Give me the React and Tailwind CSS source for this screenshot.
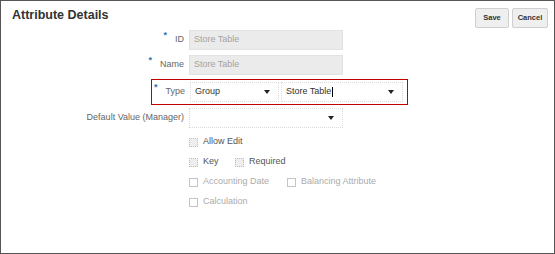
import React from "react";

const FONT = { fontFamily: '"Liberation Sans", Arial, sans-serif' };

function Star() {
  return <span className="text-[9px] font-bold leading-none text-[#2f74c0] self-start mt-[1px] mr-[8px]">*</span>;
}

function Caret() {
  return (
    <svg width="6" height="4" viewBox="0 0 6 4" className="shrink-0">
      <polygon points="0,0 6,0 3,4" fill="#222" />
    </svg>
  );
}

function ReadOnlyInput({ value }) {
  return (
    <div className="w-[154px] h-[20px] bg-[#ebebeb] border border-[#e2e2e2] flex items-center pl-[4px] text-[9px] text-[#a3a3a3]">
      {value}
    </div>
  );
}

function Select({ width, children }) {
  return (
    <div
      className="h-[20px] bg-white border border-dotted border-[#dcd8dc] flex items-center justify-between pl-[4px] pr-[8px] text-[9px] text-[#333]"
      style={{ width }}
    >
      <span className="flex items-center">{children}</span>
      <Caret />
    </div>
  );
}

function Check({ label, muted, filled }) {
  return (
    <div className="flex items-center gap-[5px]">
      <span
        className={`w-[9px] h-[9px] border ${filled ? "bg-[#eeeeee] border-dotted border-[#bdbdbd]" : "bg-white border-[#c4c4c4]"}`}
      />
      <span className={`text-[9px] ${muted ? "text-[#ababab]" : "text-[#555]"}`}>{label}</span>
    </div>
  );
}

function Row({ star, label, children }) {
  return (
    <div className="flex items-center">
      <div className="w-[183px] flex justify-end items-center text-[9px] text-[#666] h-[20px]">
        {star && <Star />}
        <span>{label}</span>
      </div>
      <div className="ml-[5px]">{children}</div>
    </div>
  );
}

export default function App() {
  return (
    <div className="w-[555px] h-[254px] border border-[#555] bg-white" style={FONT}>
      <div className="flex justify-between">
        <div className="pt-[6px] pl-[11px] text-[12.5px] leading-[16px] font-bold text-[#333]">Attribute Details</div>
        <div className="pt-[7px] pr-[6px] flex gap-[3px]">
          <button className="w-[34px] h-[20px] bg-[#efefef] border border-[#cfcfcf] rounded-[2px] text-[7.5px] font-bold text-[#333]">
            Save
          </button>
          <button className="w-[36px] h-[20px] bg-[#efefef] border border-[#cfcfcf] rounded-[2px] text-[7.5px] font-bold text-[#333]">
            Cancel
          </button>
        </div>
      </div>

      <div className="mt-[2px] flex flex-col">
        <Row star label="ID">
          <ReadOnlyInput value="Store Table" />
        </Row>
        <div className="mt-[5px]">
          <Row star label="Name">
            <ReadOnlyInput value="Store Table" />
          </Row>
        </div>

        <div className="mt-[4px] ml-[150px] w-[257px] border border-[#c00000] flex items-center py-[2px]">
          <div className="w-[33px] flex justify-end items-center text-[9px] text-[#666] h-[20px]">
            <Star />
            <span>Type</span>
          </div>
          <div className="ml-[5px] flex gap-[2px]">
            <Select width={89}>Group</Select>
            <Select width={122}>
              Store Table<span className="inline-block w-px h-[10px] bg-black ml-[1px]" />
            </Select>
          </div>
        </div>

        <div className="mt-[3px]">
          <Row label="Default Value (Manager)">
            <Select width={154} />
          </Row>
        </div>

        <div className="mt-[4px] ml-[188px] flex flex-col">
          <div className="h-[20px] flex items-center">
            <Check label="Allow Edit" filled />
          </div>
          <div className="h-[20px] flex items-center">
            <div className="w-[46px]">
              <Check label="Key" filled />
            </div>
            <Check label="Required" filled />
          </div>
          <div className="h-[20px] flex items-center">
            <div className="w-[98px]">
              <Check label="Accounting Date" muted />
            </div>
            <Check label="Balancing Attribute" muted />
          </div>
          <div className="h-[20px] flex items-center">
            <Check label="Calculation" muted />
          </div>
        </div>
      </div>
    </div>
  );
}
